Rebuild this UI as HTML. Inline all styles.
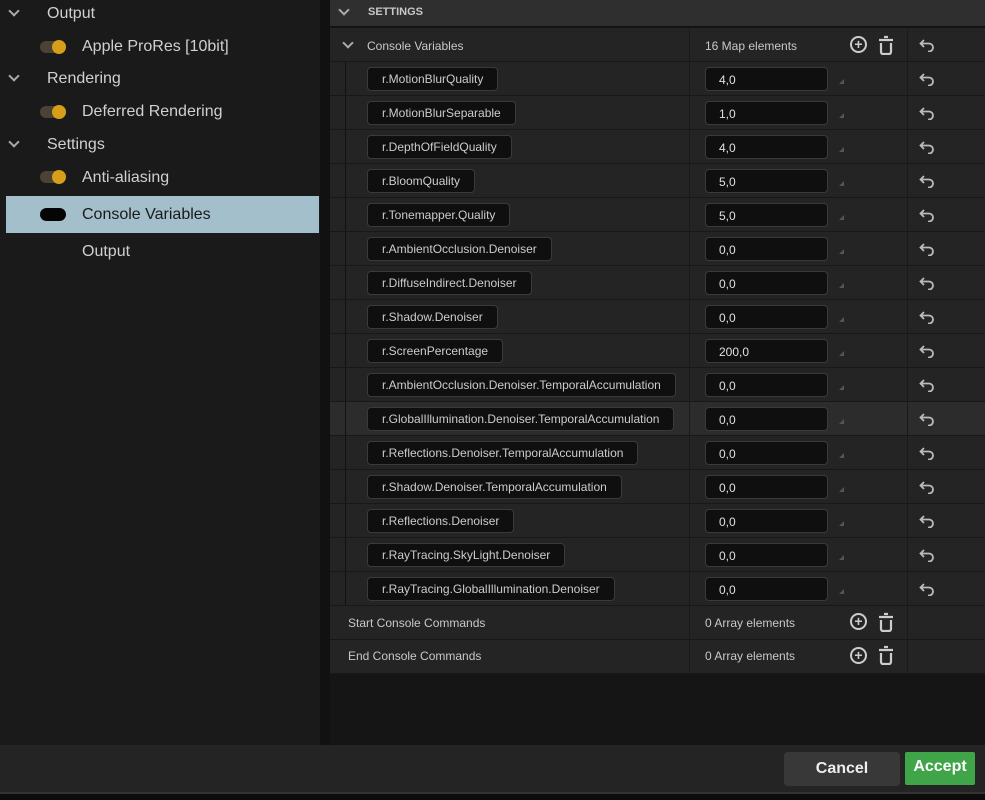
<!DOCTYPE html>
<html><head><style>
*{margin:0;padding:0;box-sizing:border-box}
body{width:985px;height:800px;background:#151515;font-family:"Liberation Sans",sans-serif;position:relative;overflow:hidden;color:#c8c8c8}
.left{position:absolute;left:0;top:0;width:320px;height:745px;background:#1a1a1a}
.sep{position:absolute;left:320px;top:0;width:10px;height:745px;background:#111}
.li{position:absolute;font-size:16px;color:#d0d0d0}
.chev{position:absolute;width:8px;height:8px;border-right:2px solid #aaa;border-bottom:2px solid #aaa;transform:rotate(45deg)}
.tog{position:absolute;width:26px;height:12px;border-radius:6px;background:#4a4232}
.tog::after{content:"";position:absolute;right:0;top:-1px;width:14px;height:14px;border-radius:7px;background:#d79e1a}
.right{position:absolute;left:330px;top:0;width:655px;height:745px;background:#151515}
.hdr{position:absolute;left:0;top:0;width:655px;height:27px;background:#2f2f2f;border-bottom:1px solid #111}
.row{position:absolute;left:0;width:655px;height:34px;background:#242424;border-bottom:1px solid #181818}
.c1{position:absolute;left:359px;top:0;width:1px;height:100%;background:#1a1a1a}
.c2{position:absolute;left:577px;top:0;width:1px;height:100%;background:#1a1a1a}
.key{position:absolute;left:37px;top:5px;height:24px;background:#0f0f0f;border:1px solid #3a3a3a;border-radius:4px;font-size:12px;color:#ccc;padding:4px 14px;white-space:nowrap}
.val{position:absolute;left:375px;top:5px;width:123px;height:24px;background:#0f0f0f;border:1px solid #3a3a3a;border-radius:4px;font-size:12px;color:#e0e0e0;padding:5px 13px}
.tri{position:absolute;left:509px;top:17px;width:0;height:0;border-left:5px solid transparent;border-bottom:5px solid #555}
.undo{position:absolute;left:589px;top:10px}
.ind{position:absolute;left:15px;top:0;width:1px;height:100%;background:#111}
.t{position:absolute;font-size:12px;color:#c8c8c8}
.plus{position:absolute;width:17px;height:17px;border:2px solid #ccc;border-radius:50%;font-size:14px;line-height:12px;text-align:center;color:#ccc;font-weight:bold}
.trash{position:absolute}
.foot{position:absolute;left:0;top:745px;width:985px;height:47px;background:#242424}
.bot{position:absolute;left:0;top:792px;width:985px;height:8px;background:#0c0c0c;border-top:2px solid #333}
</style></head><body>
<div class="left">
<div class="chev" style="left:10px;top:7px"></div><div class="li" style="left:47px;top:5px">Output</div>
<div class="tog" style="left:40px;top:41px"></div><div class="li" style="left:82px;top:38px">Apple ProRes [10bit]</div>
<div class="chev" style="left:10px;top:72px"></div><div class="li" style="left:47px;top:70px">Rendering</div>
<div class="tog" style="left:40px;top:106px"></div><div class="li" style="left:82px;top:103px">Deferred Rendering</div>
<div class="chev" style="left:10px;top:138px"></div><div class="li" style="left:47px;top:136px">Settings</div>
<div class="tog" style="left:40px;top:171px"></div><div class="li" style="left:82px;top:169px">Anti-aliasing</div>
<div style="position:absolute;left:6px;top:196px;width:313px;height:37px;background:#a3bfcc"></div>
<div style="position:absolute;left:40px;top:208px;width:26px;height:13px;border-radius:7px;background:#050505"></div>
<div class="li" style="left:82px;top:206px;color:#1a1a1a">Console Variables</div>
<div class="li" style="left:82px;top:243px">Output</div>
</div>
<div class="sep"></div>
<div class="right">
<div class="hdr"><div class="chev" style="left:10px;top:6px"></div><div class="t" style="left:38px;top:6px;font-weight:bold;font-size:11px">SETTINGS</div></div>
<div class="row" style="top:28px"><div class="c1"></div><div class="c2"></div><div class="chev" style="left:14px;top:11px"></div><div class="t" style="left:37px;top:11px">Console Variables</div><div class="t" style="left:375px;top:11px">16 Map elements</div><div class="plus" style="left:520px;top:8px">+</div><svg class="trash" style="left:548px;top:7px" width="16" height="20" viewBox="0 0 16 20"><path d="M6 2h4M1 5h14M3 8v9a2 2 0 0 0 2 2h6a2 2 0 0 0 2-2V8" fill="none" stroke="#ccc" stroke-width="2.2"/></svg><svg class="undo" width="16" height="14" viewBox="0 0 16 14"><path d="M5 2L1.5 5.5 5 9M2 5.5h8a4 4 0 0 1 0 8H9" fill="none" stroke="#bbb" stroke-width="1.8"/></svg></div>
<div id="rows"></div>
<div class="row" style="top:606px"><div class="c1"></div><div class="c2"></div><div class="t" style="left:18px;top:10px">Start Console Commands</div><div class="t" style="left:375px;top:10px">0 Array elements</div><div class="plus" style="left:520px;top:7px">+</div><svg class="trash" style="left:548px;top:6px" width="16" height="20" viewBox="0 0 16 20"><path d="M6 2h4M1 5h14M3 8v9a2 2 0 0 0 2 2h6a2 2 0 0 0 2-2V8" fill="none" stroke="#ccc" stroke-width="2.2"/></svg></div>
<div class="row" style="top:640px"><div class="c1"></div><div class="c2"></div><div class="t" style="left:18px;top:9px">End Console Commands</div><div class="t" style="left:375px;top:9px">0 Array elements</div><div class="plus" style="left:520px;top:7px">+</div><svg class="trash" style="left:548px;top:5px" width="16" height="20" viewBox="0 0 16 20"><path d="M6 2h4M1 5h14M3 8v9a2 2 0 0 0 2 2h6a2 2 0 0 0 2-2V8" fill="none" stroke="#ccc" stroke-width="2.2"/></svg></div>
</div>
<div class="foot">
<div style="position:absolute;left:784px;top:7px;width:116px;height:34px;background:#383838;border-radius:4px;color:#eee;font-size:16px;font-weight:bold;text-align:center;line-height:34px">Cancel</div>
<div style="position:absolute;left:905px;top:7px;width:70px;height:33px;background:#3fa548;border-radius:2px;color:#fff;font-size:16px;font-weight:bold;text-align:center;line-height:30px">Accept</div>
</div>
<div class="bot"></div>
<script>
var d=[["r.MotionBlurQuality","4,0"],["r.MotionBlurSeparable","1,0"],["r.DepthOfFieldQuality","4,0"],["r.BloomQuality","5,0"],["r.Tonemapper.Quality","5,0"],["r.AmbientOcclusion.Denoiser","0,0"],["r.DiffuseIndirect.Denoiser","0,0"],["r.Shadow.Denoiser","0,0"],["r.ScreenPercentage","200,0"],["r.AmbientOcclusion.Denoiser.TemporalAccumulation","0,0"],["r.GlobalIllumination.Denoiser.TemporalAccumulation","0,0"],["r.Reflections.Denoiser.TemporalAccumulation","0,0"],["r.Shadow.Denoiser.TemporalAccumulation","0,0"],["r.Reflections.Denoiser","0,0"],["r.RayTracing.SkyLight.Denoiser","0,0"],["r.RayTracing.GlobalIllumination.Denoiser","0,0"]];
var u='<svg class="undo" width="16" height="14" viewBox="0 0 16 14"><path d="M5 2L1.5 5.5 5 9M2 5.5h8a4 4 0 0 1 0 8H9" fill="none" stroke="#bbb" stroke-width="1.8"/></svg>';
var h="";d.forEach(function(r,i){h+='<div class="row" style="top:'+(62+34*i)+'px'+(i==10?';background:#2c2c2c':'')+'"><div class="ind"></div><div class="c1"></div><div class="c2"></div><div class="key">'+r[0]+'</div><div class="val">'+r[1]+'</div><div class="tri"></div>'+u+'</div>'});
document.getElementById("rows").outerHTML=h;
</script>
</body></html>
